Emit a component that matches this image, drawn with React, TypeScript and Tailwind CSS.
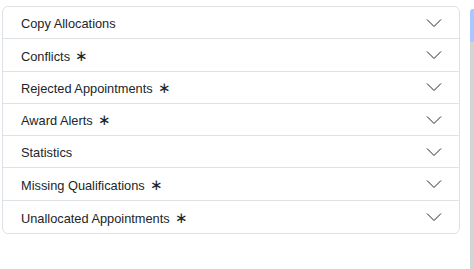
const items = [
  { label: "Copy Allocations", star: false },
  { label: "Conflicts", star: true },
  { label: "Rejected Appointments", star: true },
  { label: "Award Alerts", star: true },
  { label: "Statistics", star: false },
  { label: "Missing Qualifications", star: true },
  { label: "Unallocated Appointments", star: true },
];

function Chevron() {
  return (
    <svg width="16" height="10" viewBox="0 0 16 10" fill="none" className="text-[#212529]">
      <path d="M1 1.5 L8 8.5 L15 1.5" stroke="currentColor" strokeWidth="1" />
    </svg>
  );
}

export default function App() {
  return (
    <div
      className="flex h-[269px] w-[474px] bg-white"
      style={{ fontFamily: '"Liberation Sans", Arial, sans-serif' }}
    >
      <div className="ml-[2px] mt-[6px] h-[228px] w-[458px] overflow-hidden rounded-[6px] border border-[#dee2e6]">
        {items.map((it, i) => (
          <button
            key={it.label}
            type="button"
            className={
              "flex h-[32.3px] w-full items-center justify-between pl-[18px] pr-[17px] text-left text-[12.8px] text-[#212529] " +
              (i < items.length - 1 ? "border-b border-[#dee2e6]" : "")
            }
          >
            <span className="pt-[2px]">
              {it.label}
              {it.star && <span className="ml-[5px] text-[15px]">∗</span>}
            </span>
            <Chevron />
          </button>
        ))}
      </div>
      <div className="ml-auto mt-[9px] flex w-[4px] flex-col overflow-hidden rounded-tl-[3px]">
        <div className="h-[33px] bg-[#a8c8ff]" />
        <div className="flex-1 bg-[#d4d4d4]" />
      </div>
    </div>
  );
}
